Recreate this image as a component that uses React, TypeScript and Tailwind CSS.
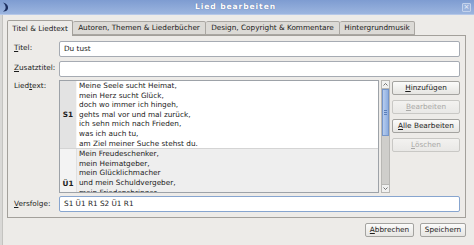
import React from "react";

function U({ c }: { c: string }) {
  return <span className="underline underline-offset-[1px] decoration-[0.7px]">{c}</span>;
}

function Btn({ children, disabled, w }: { children: React.ReactNode; disabled?: boolean; w: string }) {
  return (
    <div
      className={`${w} h-[14px] rounded-[2px] border flex items-center justify-center bg-linear-to-b ${
        disabled
          ? "border-[#c9c8c5] from-[#f3f2f0] to-[#e9e8e6] text-[#a9a8a6]"
          : "border-[#a4a3a0] from-[#fbfbfa] to-[#e6e5e2] text-[#1c1c1c]"
      }`}
    >
      {children}
    </div>
  );
}

export default function App() {
  const s1 = [
    "Meine Seele sucht Heimat,",
    "mein Herz sucht Glück,",
    "doch wo immer ich hingeh,",
    "gehts mal vor und mal zurück,",
    "ich sehn mich nach Frieden,",
    "was ich auch tu,",
    "am Ziel meiner Suche stehst du.",
  ];
  const u1 = [
    "Mein Freudeschenker,",
    "mein Heimatgeber,",
    "mein Glücklichmacher",
    "und mein Schuldvergeber,",
    "mein Friedensbringer",
  ];
  return (
    <div className="w-[474px] h-[245px] overflow-hidden bg-[#edebe8] flex flex-col font-['DejaVu_Sans',sans-serif] text-[7.3px] leading-none text-[#1c1c1c]">
      {/* title bar */}
      <div className="h-[15px] shrink-0 bg-linear-to-b from-[#7e9cd1] to-[#9cb5df] border-b border-[#b6c8e8] flex items-center pl-[2px] pr-[3px]">
        <svg width="7" height="10" viewBox="0 0 7 10" className="shrink-0">
          <path d="M1 0.5 C5 1.5 6.5 4 6 6.5 C5.5 8.5 3.5 9.8 1 9.5 C3 8.3 3.8 6.8 3.6 5 C3.4 3.2 2.5 1.6 1 0.5 Z" fill="#1d2f5e" />
        </svg>
        <div className="flex-1 text-center text-white font-bold text-[7.6px] tracking-[0.9px] [text-shadow:0_0_1px_rgba(40,60,110,0.6)]">
          Lied bearbeiten
        </div>
        <div className="w-[9px] h-[9px] border border-[#c3d2ec] rounded-[1px] bg-[#9ab2dc] flex items-center justify-center text-[7px] text-[#eef3fb] leading-none">
          ×
        </div>
      </div>

      {/* body */}
      <div className="flex-1 flex flex-row">
        <div className="w-[3px] shrink-0 bg-[#d9d8d6] border-r border-[#c4c3c0]" />
        <div className="flex-1 pl-[4px] pr-[8px] pt-[5px] flex flex-col">
          {/* tabs */}
          <div className="flex items-end h-[15px] relative z-10">
            <div className="w-[66px] h-[16px] mb-[-1px] bg-[#edebe8] border border-b-0 border-[#a3a09b] rounded-t-[2px] flex items-center justify-center">
              Titel &amp; Liedtext
            </div>
            <div className="w-[133px] h-[14px] bg-[#dcdad6] border border-[#aaa7a2] border-l-0 rounded-t-[2px] flex items-center justify-center">
              Autoren, Themen &amp; Liederbücher
            </div>
            <div className="w-[134px] h-[14px] bg-[#dcdad6] border border-[#aaa7a2] border-l-0 rounded-t-[2px] flex items-center justify-center">
              Design, Copyright &amp; Kommentare
            </div>
            <div className="w-[75px] h-[14px] bg-[#dcdad6] border border-[#aaa7a2] border-l-0 rounded-t-[2px] flex items-center justify-center">
              Hintergrundmusik
            </div>
          </div>

          {/* panel */}
          <div className="h-[183px] border border-[#a3a09b] bg-[#edebe8] pt-[5px] pb-[5px] pl-[6px] pr-[5px] flex flex-col">
            <div className="flex items-center h-[16px]">
              <div className="w-[45px] -mt-[3px]">
                <U c="T" />itel:
              </div>
              <div className="flex-1 h-[16px] bg-white border border-[#a6abb3] rounded-[2px] flex items-center pl-[4px]">
                Du tust
              </div>
            </div>
            <div className="flex items-center h-[16px] mt-[4px]">
              <div className="w-[45px] -mt-[3px]">
                <U c="Z" />usatztitel:
              </div>
              <div className="flex-1 h-[16px] bg-white border border-[#a6abb3] rounded-[2px]" />
            </div>

            <div className="flex h-[113px] mt-[3px]">
              <div className="w-[45px] pt-[2px]">
                Lied<U c="t" />ext:
              </div>
              {/* list */}
              <div className="w-[320px] h-[113px] border border-[#9da2a8] bg-white overflow-hidden flex flex-col">
                <div className="flex shrink-0 border-b border-[#d4d4d4]">
                  <div className="w-[17px] shrink-0 bg-[#e3e3e3] border-r border-[#f6f6f6] flex items-center justify-center font-bold">
                    S1
                  </div>
                  <div className="flex-1 pl-[2px] leading-[9.6px] bg-white">
                    {s1.map((l) => (
                      <div key={l}>{l}</div>
                    ))}
                  </div>
                </div>
                <div className="flex shrink-0 h-[68px] bg-[#eeeeee]">
                  <div className="w-[17px] shrink-0 bg-[#f3f3f3] border-r border-[#e0e0e0] flex items-center justify-center font-bold">
                    Ü1
                  </div>
                  <div className="flex-1 pl-[2px] leading-[9.6px]">
                    {u1.map((l) => (
                      <div key={l}>{l}</div>
                    ))}
                  </div>
                </div>
              </div>
              {/* scrollbar */}
              <div className="w-[9px] ml-[2px] h-[113px] bg-[#cfcecb] border border-[#b8b7b4] flex flex-col">
                <div className="h-[8px] bg-[#f1f1f0] border-b border-[#b8b7b4] flex items-center justify-center">
                  <svg width="5" height="3" viewBox="0 0 5 3">
                    <path d="M0.5 2.5 L2.5 0.5 L4.5 2.5" fill="none" stroke="#555" strokeWidth="0.8" />
                  </svg>
                </div>
                <div className="h-[47px] bg-linear-to-r from-[#b7cdee] to-[#8eaee0] border border-[#7596cb] flex items-center justify-center">
                  <div className="flex flex-col gap-[1px]">
                    <div className="w-[3px] h-[0.7px] bg-[#5b7fb9]" />
                    <div className="w-[3px] h-[0.7px] bg-[#5b7fb9]" />
                    <div className="w-[3px] h-[0.7px] bg-[#5b7fb9]" />
                  </div>
                </div>
                <div className="flex-1" />
                <div className="h-[8px] bg-[#f1f1f0] border-t border-[#b8b7b4] flex items-center justify-center">
                  <svg width="5" height="3" viewBox="0 0 5 3">
                    <path d="M0.5 0.5 L2.5 2.5 L4.5 0.5" fill="none" stroke="#555" strokeWidth="0.8" />
                  </svg>
                </div>
              </div>
              {/* buttons */}
              <div className="flex-1 ml-[2px] flex flex-col gap-[5px] pt-[1px]">
                <Btn w="w-full">
                  <span><U c="H" />inzufügen</span>
                </Btn>
                <Btn w="w-full" disabled>
                  <span><U c="B" />earbeiten</span>
                </Btn>
                <Btn w="w-full">
                  <span><U c="A" />lle Bearbeiten</span>
                </Btn>
                <Btn w="w-full" disabled>
                  <span><U c="L" />öschen</span>
                </Btn>
              </div>
            </div>

            <div className="flex items-center h-[16px] mt-[3px]">
              <div className="w-[45px] -mt-[1px]">
                <U c="V" />ersfolge:
              </div>
              <div className="flex-1 h-[16px] bg-white border border-[#87a5cf] rounded-[2px] flex items-center pl-[4px]">
                S1 Ü1 R1 S2 Ü1 R1
              </div>
            </div>
          </div>

          {/* dialog buttons */}
          <div className="mt-[5px] flex justify-end gap-[6px]">
            <Btn w="w-[49px]">
              <span><U c="A" />bbrechen</span>
            </Btn>
            <Btn w="w-[46px]">
              <span>Speichern</span>
            </Btn>
          </div>
        </div>
      </div>
    </div>
  );
}
